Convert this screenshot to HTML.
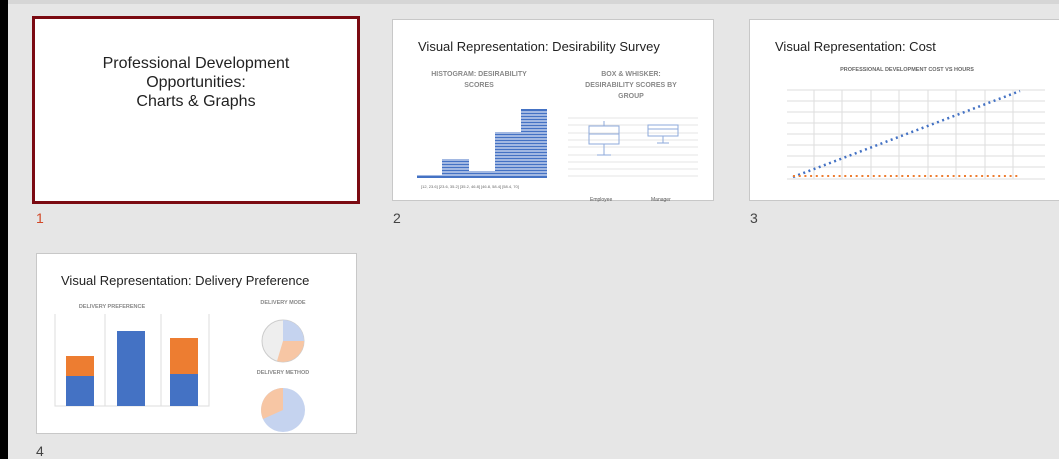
<!DOCTYPE html>
<html><head><style>
body{margin:0;width:1059px;height:459px;background:#e6e6e6;position:relative;overflow:hidden;font-family:"Liberation Sans",sans-serif}
.s{position:absolute;background:#fff;border:1px solid #c8c8c8;box-sizing:border-box}
.n{position:absolute;font-size:14px;color:#444}
.t{position:absolute;font-size:13px;color:#222;white-space:nowrap}
</style></head><body>
<div style="position:absolute;left:0;top:0;width:8px;height:459px;background:#000"></div>
<div style="position:absolute;left:8px;top:0;width:1051px;height:4px;background:#d6d6d6"></div>
<div class="s" style="left:32px;top:16px;width:328px;height:188px;border:3px solid #7b0a12">
<div style="position:absolute;left:0;right:0;top:35px;text-align:center;font-size:16px;line-height:19px;color:#222">Professional Development<br>Opportunities:<br>Charts &amp; Graphs</div></div>
<div class="n" style="left:36px;top:210px;color:#d24726">1</div>
<div class="s" style="left:392px;top:19px;width:322px;height:182px">
<div class="t" style="left:25px;top:19px">Visual Representation: Desirability Survey</div>
<svg width="322" height="182" style="position:absolute;left:0;top:0">
<g font-size="7" fill="#888" font-weight="bold" text-anchor="middle" font-family="Liberation Sans"><text x="86" y="56">HISTOGRAM: DESIRABILITY</text><text x="86" y="67">SCORES</text>
<text x="238" y="56">BOX &amp; WHISKER:</text><text x="238" y="67">DESIRABILITY SCORES BY</text><text x="238" y="78">GROUP</text></g>
<g fill="#4472c4"><rect x="24" y="155" width="25" height="3"/><rect x="49" y="139" width="27" height="19"/><rect x="76" y="151" width="26" height="7"/><rect x="102" y="112" width="26" height="46"/><rect x="128" y="89" width="26" height="69"/></g>
<g stroke="#fff" stroke-width="1"><path d="M24 92H154M24 95H154M24 98H154M24 101H154M24 104H154M24 107H154M24 110H154M24 113H154M24 116H154M24 119H154M24 122H154M24 125H154M24 128H154M24 131H154M24 134H154M24 137H154M24 140H154M24 143H154M24 146H154M24 149H154M24 152H154M24 155H154"/></g>
<g font-size="4" fill="#666"><text x="28" y="168">[12, 23.6] [23.6, 35.2] [35.2, 46.8] [46.8, 58.4] [58.4, 70]</text></g>
<g stroke="#e4e4e4"><path d="M175 98H305M175 105H305M175 113H305M175 120H305M175 127H305M175 135H305M175 142H305M175 149H305M175 156H305"/></g>
<g stroke="#8eaadb" fill="none"><rect x="196" y="106" width="30" height="18"/><rect x="255" y="105" width="30" height="11"/><path d="M211 106V101M211 124V135M204 135H218M270 116V123M264 123H276M196 114H226M255 109H285"/></g>
<g font-size="5" fill="#555"><text x="197" y="181">Employee</text><text x="258" y="181">Manager</text></g>
</svg></div>
<div class="n" style="left:393px;top:210px">2</div>
<div class="s" style="left:749px;top:19px;width:320px;height:182px">
<div class="t" style="left:25px;top:19px">Visual Representation: Cost</div>
<svg width="320" height="182" style="position:absolute;left:0;top:0">
<text x="157" y="51" font-size="5.5" font-weight="bold" fill="#666" text-anchor="middle">PROFESSIONAL DEVELOPMENT COST VS HOURS</text>
<g stroke="#ddd"><path d="M37 70H295M37 81H295M37 92H295M37 103H295M37 114H295M37 125H295M37 136H295M37 147H295M37 159H295M64 70V159M92 70V159M121 70V159M149 70V159M178 70V159M206 70V159M235 70V159M263 70V159"/></g>
<path d="M43 157L270 71" stroke="#4472c4" stroke-width="2.5" stroke-dasharray="2 3.5"/>
<path d="M43 156L270 156" stroke="#ed7d31" stroke-width="2" stroke-dasharray="2 3.7"/>
</svg></div>
<div class="n" style="left:750px;top:210px">3</div>
<div class="s" style="left:36px;top:253px;width:321px;height:181px">
<div class="t" style="left:24px;top:19px">Visual Representation: Delivery Preference</div>
<svg width="321" height="181" style="position:absolute;left:0;top:0">
<g font-size="5.5" font-weight="bold" fill="#888" text-anchor="middle"><text x="75" y="54">DELIVERY PREFERENCE</text><text x="246" y="50">DELIVERY MODE</text><text x="246" y="120">DELIVERY METHOD</text></g>
<path d="M18 60V152H172V60M68 60V152M124 60V152" stroke="#ddd" fill="none"/>
<rect x="29" y="122" width="28" height="30" fill="#4472c4"/><rect x="29" y="102" width="28" height="20" fill="#ed7d31"/>
<rect x="80" y="77" width="28" height="75" fill="#4472c4"/>
<rect x="133" y="120" width="28" height="32" fill="#4472c4"/><rect x="133" y="84" width="28" height="36" fill="#ed7d31"/>
<circle cx="246" cy="87" r="21" fill="#eee" stroke="#ccc"/>
<path d="M246 87V66A21 21 0 0 1 267 87Z" fill="#c5d3ef"/><path d="M246 87H267A21 21 0 0 1 240 107Z" fill="#f7c6a4"/>
<circle cx="246" cy="156" r="22" fill="#c5d3ef"/><path d="M246 156V134A22 22 0 0 0 226 165Z" fill="#f7c6a4"/>
</svg></div>
<div class="n" style="left:36px;top:443px">4</div>
</body></html>
